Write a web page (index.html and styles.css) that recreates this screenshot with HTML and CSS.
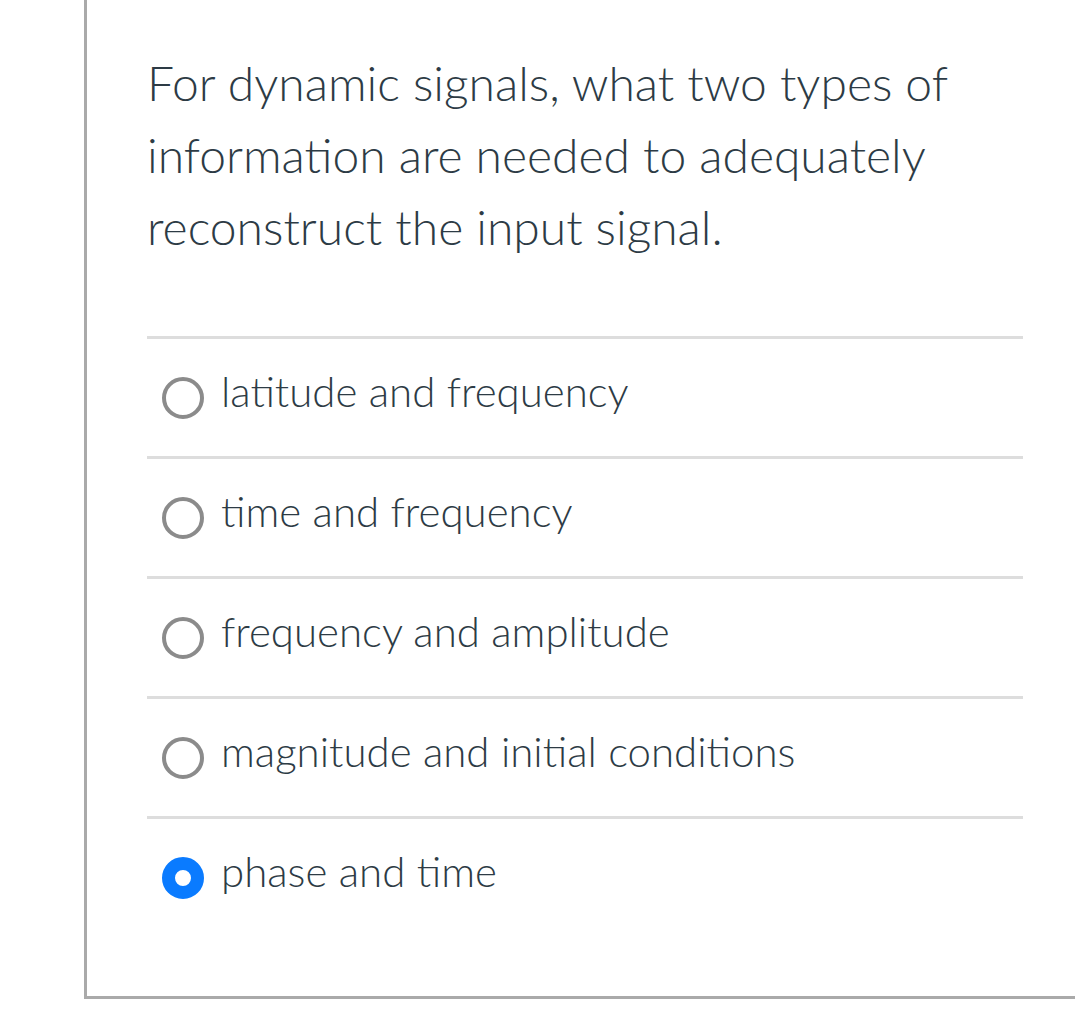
FILE: index.html
```html
<!DOCTYPE html>
<html lang="en">
<head>
<meta charset="utf-8">
<title>Question</title>
<link rel="stylesheet" href="styles.css">
</head>
<body>
<div class="question-box">
  <p class="question-text">For dynamic signals, what two types of information are needed to adequately reconstruct the input signal.</p>
  <div class="answers">
    <label class="answer"><span class="radio"></span><span class="answer-text">latitude and frequency</span></label>
    <label class="answer"><span class="radio"></span><span class="answer-text">time and frequency</span></label>
    <label class="answer"><span class="radio"></span><span class="answer-text">frequency and amplitude</span></label>
    <label class="answer"><span class="radio"></span><span class="answer-text">magnitude and initial conditions</span></label>
    <label class="answer"><span class="radio selected"></span><span class="answer-text">phase and time</span></label>
  </div>
</div>
</body>
</html>
```

FILE: styles.css
```css
html, body {
  margin: 0;
  padding: 0;
  background: #ffffff;
}

body {
  font-family: "Lato", "Liberation Sans", sans-serif;
  color: #2d3b45;
}

.question-box {
  margin-left: 84px;
  border-left: 3px solid #aaaaaa;
  border-bottom: 3px solid #aaaaaa;
  padding: 47px 52px 60px 60px;
}

.question-text {
  margin: 0 0 73px 0;
  font-size: 48px;
  line-height: 72px;
  font-weight: 300;
  max-width: 820px;
}

.answers {
  display: flex;
  flex-direction: column;
}

.answer {
  display: flex;
  align-items: center;
  height: 117px;
  border-top: 3px solid #dddddd;
  padding-left: 15px;
  gap: 17px;
}

.radio {
  box-sizing: border-box;
  width: 42px;
  height: 42px;
  border-radius: 50%;
  border: 4px solid #8b8b8b;
  background: #ffffff;
  flex: none;
}

.radio.selected {
  border: 13px solid #0a7bff;
  background: #ffffff;
}

.answer-text {
  font-size: 42px;
  line-height: 46px;
  font-weight: 300;
  margin-bottom: 14px;
}
```
